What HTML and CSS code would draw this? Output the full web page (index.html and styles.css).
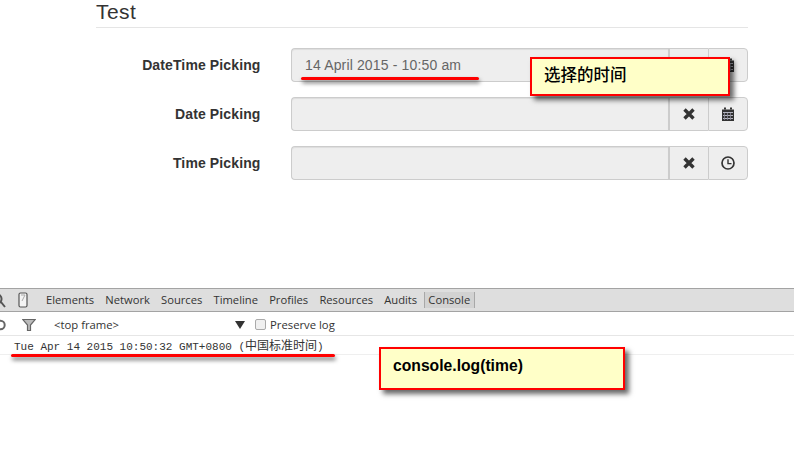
FILE: index.html
```html
<!DOCTYPE html>
<html lang="en">
<head>
<meta charset="utf-8">
<title>Test</title>
<link rel="stylesheet" href="styles.css">
</head>
<body>
<main class="page">
  <section class="app">
    <h1 class="title">Test</h1>
    <form class="form">
      <div class="row">
        <label class="label">DateTime Picking</label>
        <div class="group">
          <div class="field filled">14 April 2015 - 10:50 am</div>
          <span class="addon"><svg class="icon" viewBox="0 0 14 14"><path d="M2.5 2.5 L11.5 11.5 M11.5 2.5 L2.5 11.5" class="x"/></svg></span>
          <span class="addon"><svg class="icon" viewBox="0 0 14 14"><path d="M1 2.500 H13 V14 H1 Z" fill="#333"/><path d="M3 0.500 H5 V2.500 H3 Z M9 0.500 H11 V2.500 H9 Z" fill="#333"/><path d="M2 5.500 H12 M2 8.500 H12 M2 11.500 H12" stroke="#b4b4c0" fill="none"/><path d="M3.500 6 V13 M6.500 6 V13 M9.500 6 V13" stroke="#8a8a98" stroke-width=".8" fill="none"/></svg></span>
        </div>
      </div>
      <div class="row">
        <label class="label">Date Picking</label>
        <div class="group">
          <div class="field"></div>
          <span class="addon"><svg class="icon" viewBox="0 0 14 14"><path d="M2.5 2.5 L11.5 11.5 M11.5 2.5 L2.5 11.5" class="x"/></svg></span>
          <span class="addon"><svg class="icon" viewBox="0 0 14 14"><path d="M1 2.500 H13 V14 H1 Z" fill="#333"/><path d="M3 0.500 H5 V2.500 H3 Z M9 0.500 H11 V2.500 H9 Z" fill="#333"/><path d="M2 5.500 H12 M2 8.500 H12 M2 11.500 H12" stroke="#b4b4c0" fill="none"/><path d="M3.500 6 V13 M6.500 6 V13 M9.500 6 V13" stroke="#8a8a98" stroke-width=".8" fill="none"/></svg></span>
        </div>
      </div>
      <div class="row">
        <label class="label">Time Picking</label>
        <div class="group">
          <div class="field"></div>
          <span class="addon"><svg class="icon" viewBox="0 0 14 14"><path d="M2.5 2.5 L11.5 11.5 M11.5 2.5 L2.5 11.5" class="x"/></svg></span>
          <span class="addon"><svg class="icon" viewBox="0 0 14 14"><circle cx="7" cy="7" r="6" fill="none" stroke="#333" stroke-width="1.700"/><path d="M7 3.200 V7.600 H10.500" fill="none" stroke="#333" stroke-width="1.400"/></svg></span>
        </div>
      </div>
    </form>
  </section>

  <section class="devtools">
    <nav class="tabs">
      <svg class="tool-search" viewBox="0 0 10 16"><path d="M-3 2.500 A4.500 4.500 0 1 1 -2.900 11.500 A4.500 4.500 0 1 1 -3 2.500 Z M1 10 L5 15" fill="none" stroke="#555" stroke-width="2"/></svg>
      <svg class="tool-device" viewBox="0 0 10 16"><rect x="1" y="1" width="8" height="14" rx="1.500" fill="#f4f4f4" stroke="#555" stroke-width="1.200"/><path d="M3 3 H7 L4 9" fill="none" stroke="#aaa"/></svg>
      <span class="tab">Elements</span>
      <span class="tab">Network</span>
      <span class="tab">Sources</span>
      <span class="tab">Timeline</span>
      <span class="tab">Profiles</span>
      <span class="tab">Resources</span>
      <span class="tab">Audits</span>
      <span class="tab active">Console</span>
    </nav>
    <div class="filters">
      <svg class="tool-clear" viewBox="0 0 6 12"><circle cx="0.500" cy="6" r="4.200" fill="none" stroke="#666" stroke-width="2"/></svg>
      <svg class="tool-funnel" viewBox="0 0 14 14"><path d="M0.700 1.500 H13.300 L8.500 7 V12.500 H5.500 V7 Z" fill="#bbb" stroke="#666" stroke-width="1.200"/></svg>
      <span class="frame">&lt;top frame&gt;</span>
      <span class="arrow"></span>
      <span class="check"></span>
      <span class="preserve">Preserve log</span>
    </div>
    <div class="log">Tue Apr 14 2015 10:50:32 GMT+0800 (<span class="cjk">中国标准时间</span>)</div>
  </section>
</main>

<div class="underline line-one"></div>
<div class="underline line-two"></div>
<div class="note note-one">选择的时间</div>
<div class="note note-two">console.log(time)</div>
</body>
</html>
```
FILE: styles.css
```css
* { box-sizing: border-box; }
html, body { margin: 0; height: 100%; overflow: hidden; background: #fff; }
body { font-family: "Liberation Sans", Arial, sans-serif; color: #333; position: relative; }
.page { display: flex; flex-direction: column; height: 476px; }

.app { height: 288px; padding-left: 96px; padding-right: 46px; }
.title { margin: 0; height: 28px; font-size: 21px; font-weight: 400; line-height: 24px; letter-spacing: .4px; border-bottom: 1px solid #e5e5e5; color: #333; }
.form { padding-top: 20px; display: flex; flex-direction: column; gap: 15px; }
.row { display: flex; height: 34px; }
.label { width: 164.500px; text-align: right; font-size: 14px; font-weight: 700; line-height: 34px; letter-spacing: .12px; }
.group { margin-left: 30.500px; width: 457px; display: flex; }
.field { flex: 1; height: 34px; padding: 0 13px; background: #eee; border: 1px solid #ccc; border-right-width: 0; border-radius: 4px 0 0 4px; font-size: 14px; line-height: 33px; letter-spacing: .15px; color: #666; box-shadow: inset 0 1px 1px rgba(0,0,0,.075); }
.addon { width: 40px; height: 34px; background: #eee; border: 1px solid #ccc; border-right-width: 0; display: flex; align-items: center; justify-content: center; }
.addon:nth-child(2) { border-left-width: 2px; }
.addon:last-child { border-right-width: 1px; border-radius: 0 4px 4px 0; }
.icon { width: 14px; height: 14px; display: block; }
.x { fill: none; stroke: #333; stroke-width: 3.400; }

.devtools { flex: 1; display: flex; flex-direction: column; }
.tabs { height: 24px; background: #dedede; border-top: 1px solid #a3a3a3; border-bottom: 1px solid #a3a3a3; display: flex; align-items: center; gap: 11.200px; font-family: "Open Sans", sans-serif; font-size: 11.200px; color: #333; }
.tool-search { width: 10px; height: 16px; flex: none; }
.tool-device { width: 10px; height: 16px; flex: none; margin-left: -3.200px; margin-right: 6.800px; }
.tab { white-space: nowrap; height: 100%; line-height: 22px; }
.tab.active { padding: 0 4px 0 3px; height: 16px; line-height: 16px; border-left: 1px solid #a8a8a8; border-right: 1px solid #a8a8a8; background: #d2d2d2; margin-left: -4px; }
.filters { height: 24px; padding-top: 2px; border-bottom: 1px solid #e6e6e6; display: flex; align-items: center; font-family: "Open Sans", sans-serif; font-size: 11.300px; color: #333; }
.tool-clear { width: 6px; height: 12px; flex: none; }
.tool-funnel { width: 14px; height: 14px; flex: none; margin-left: 16px; }
.frame { margin-left: 18px; width: 181px; }
.arrow { width: 0; height: 0; border-left: 5px solid transparent; border-right: 5px solid transparent; border-top: 8px solid #333; }
.check { width: 11px; height: 11px; margin-left: 10px; border: 1px solid #aaa; border-radius: 2px; background: #f0f0f0; }
.preserve { margin-left: 4px; }
.log { height: 19px; padding-left: 14px; border-bottom: 1px solid #efefef; font: 11px/18px "Liberation Mono", "DejaVu Sans Mono", monospace; color: #333; white-space: nowrap; }
.cjk { font-family: "Noto Sans CJK SC", sans-serif; font-size: 12px; }

.underline { position: absolute; height: 3px; border-radius: 2px; background: #f00; box-shadow: 1px 3px 4px rgba(0,0,0,.6); }
.line-one { left: 301px; top: 77px; width: 178px; }
.line-two { left: 11px; top: 354px; width: 324px; }
.note { position: absolute; border: 2px solid #f00; background: #ffffc8; box-shadow: 4px 4px 5px rgba(0,0,0,.6); color: #000; font-weight: 700; padding-left: 12px; }
.note-one { left: 530px; top: 57px; width: 200px; height: 39px; line-height: 31px; font-family: "Noto Sans CJK SC", sans-serif; font-size: 16.500px; font-weight: 500; }
.note-two { left: 379px; top: 347px; width: 246px; height: 43px; line-height: 34px; font-size: 15.700px; }
```
